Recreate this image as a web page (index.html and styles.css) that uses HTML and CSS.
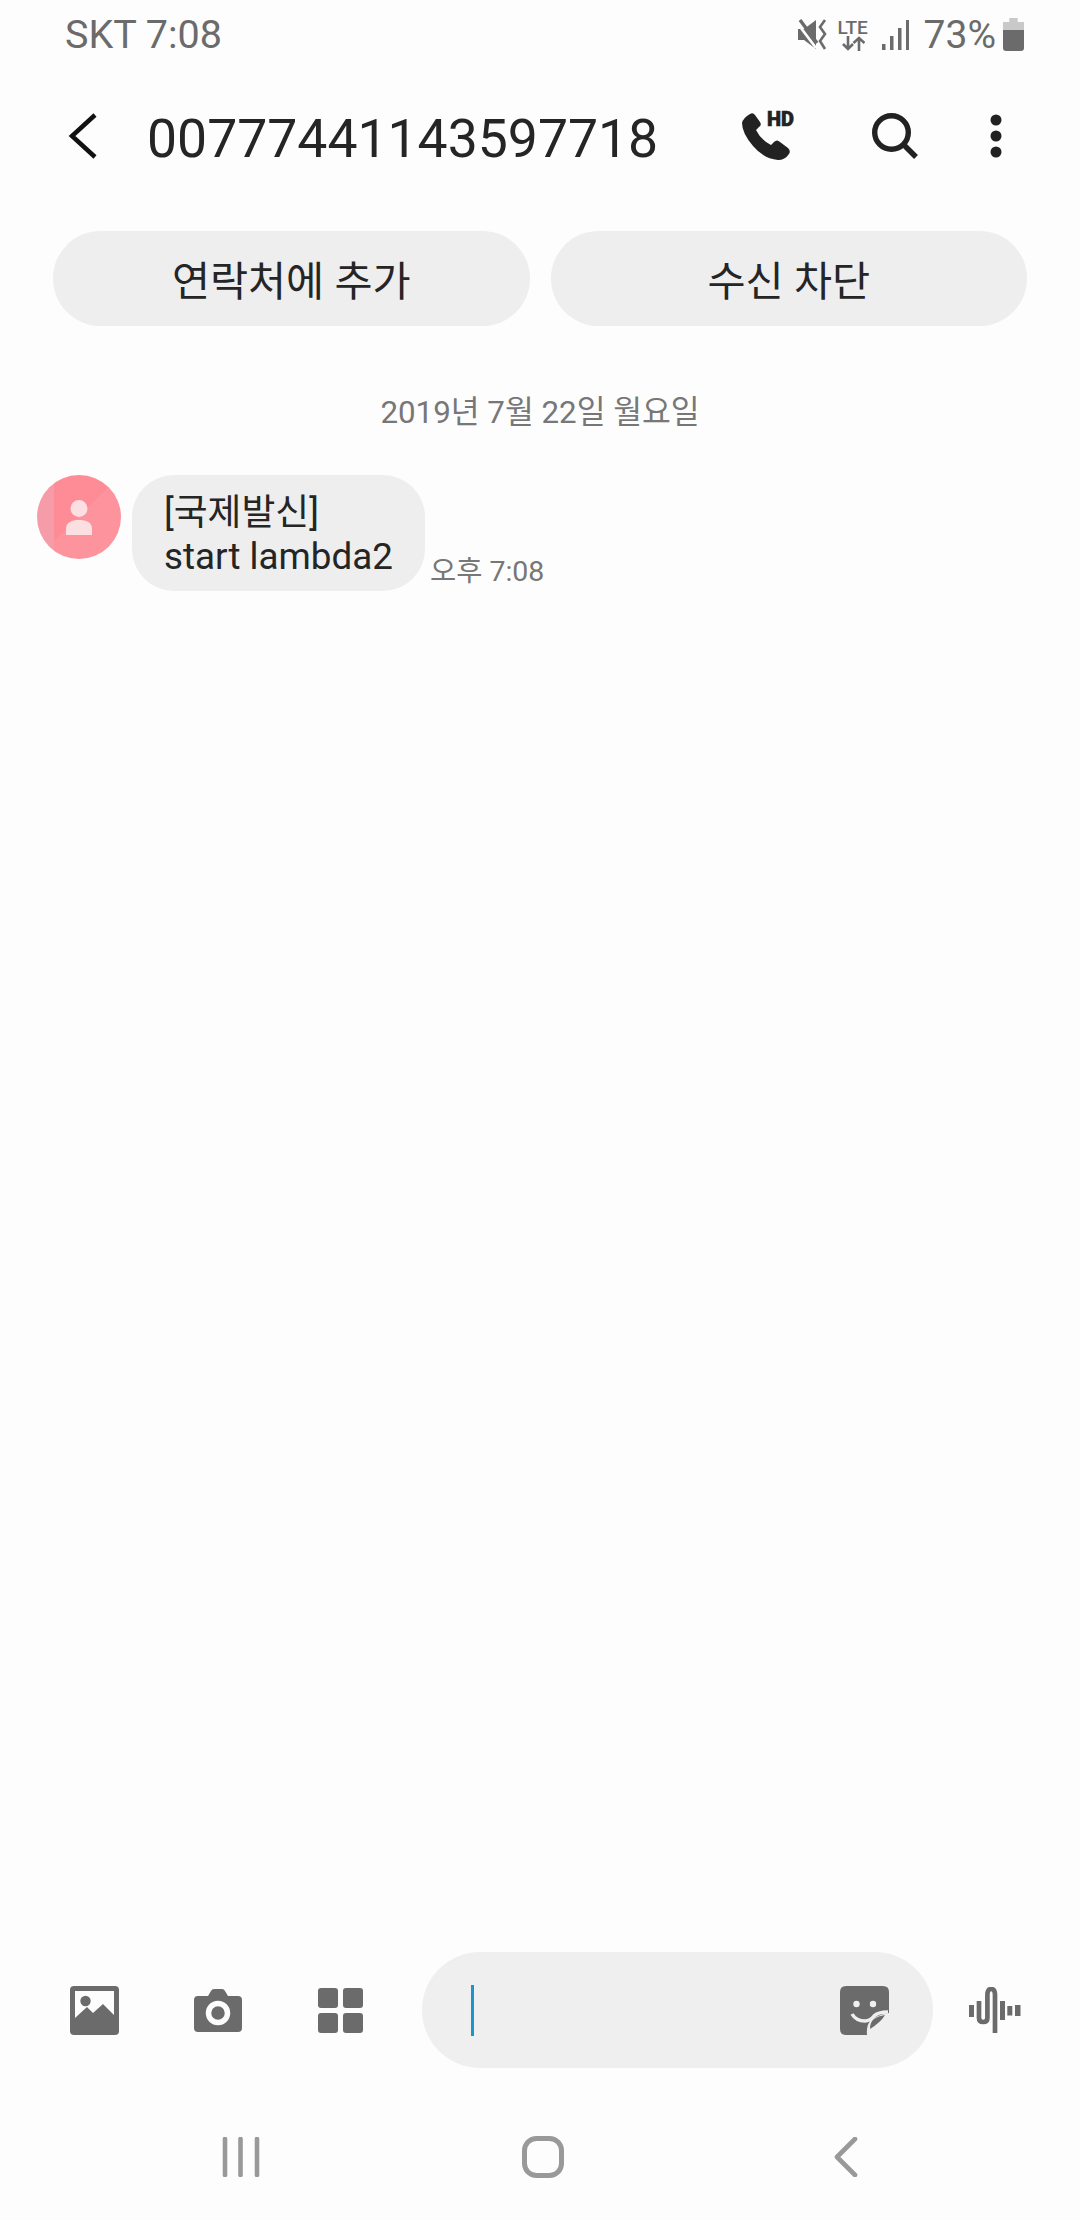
FILE: index.html
```html
<!DOCTYPE html>
<html lang="ko">
<head>
  <meta charset="UTF-8">
  <title>Messages</title>
  <link rel="stylesheet" href="styles.css">
</head>
<body>
<div class="screen">

  <div class="status">
    <span class="status-left">SKT 7:08</span>
    <div class="status-right">
      <svg class="ic-mute" width="30" height="31" viewBox="0 0 30 31">
        <path d="M0 10h6l12-9v29L6 21H0z" fill="#6b6b6b"/>
        <path d="M0 5l18 24" stroke="#fdfdfd" stroke-width="2.600"/>
        <path d="M2 1l17 23" stroke="#6b6b6b" stroke-width="3.400"/>
        <path d="M27 1l-5 7 5 7-5 7 5 8" fill="none" stroke="#6b6b6b" stroke-width="2.600"/>
      </svg>
      <div class="ic-lte">
        <span class="lte-text">LTE</span>
        <svg width="24" height="15" viewBox="0 0 24 15">
          <path d="M7 0v13M2 8l5 5 5-5" fill="none" stroke="#6b6b6b" stroke-width="2.600"/>
          <path d="M18 15V2M12.500 7l5.500-5 5.500 5" fill="none" stroke="#6b6b6b" stroke-width="2.600"/>
        </svg>
      </div>
      <svg class="ic-signal" width="27" height="30" viewBox="0 0 27 30" fill="#6b6b6b">
        <rect x="0" y="24" width="3.500" height="6"/>
        <rect x="8" y="16" width="3.500" height="14"/>
        <rect x="16" y="8" width="3.500" height="22"/>
        <rect x="24" y="0" width="3" height="30"/>
      </svg>
      <span class="battery-text">73%</span>
      <div class="battery"></div>
    </div>
  </div>

  <div class="header">
    <svg class="ic-back" width="30" height="46" viewBox="0 0 30 46">
      <path d="M27 2L4 23l23 21" fill="none" stroke="#111" stroke-width="4.500"/>
    </svg>
    <h1 class="title">00777441143597718</h1>
    <svg class="ic-call" width="56" height="57" viewBox="0 -8 56 57">
      <path d="M8 3Q11 1 13 4L18 11Q20 14 17 16L14 19Q19 29 29 34L32 31Q35 28 38 31L46 37Q49 40 47 43Q43 49 36 49Q22 48 11 35Q0 22 0 12Q1 7 8 3Z" fill="#222"/>
      <text x="25" y="15" font-family="Roboto" font-weight="900" font-size="21" textLength="27" lengthAdjust="spacingAndGlyphs" fill="#222" stroke="#222" stroke-width=".6">HD</text>
    </svg>
    <svg class="ic-search" width="46" height="46" viewBox="0 0 46 46">
      <circle cx="19.500" cy="19.500" r="16.800" fill="none" stroke="#222" stroke-width="5.400"/>
      <path d="M31 31l13 13" stroke="#222" stroke-width="5.400"/>
    </svg>
    <svg class="ic-more" width="12" height="44" viewBox="0 0 12 44" fill="#222">
      <circle cx="6" cy="6" r="5.500"/>
      <circle cx="6" cy="22" r="5.500"/>
      <circle cx="6" cy="38" r="5.500"/>
    </svg>
  </div>

  <div class="actions">
    <div class="action-btn">연락처에 추가</div>
    <div class="action-btn">수신 차단</div>
  </div>

  <div class="date">2019년 7월 22일 월요일</div>

  <div class="message">
    <div class="avatar">
      <svg width="26" height="35" viewBox="0 0 26 35" fill="#fbdfe1">
        <circle cx="13" cy="8.500" r="8.500"/>
        <path d="M0 35v-6C0 22 6 20 13 20s13 2 13 9v6z"/>
      </svg>
    </div>
    <div class="bubble">[국제발신]<br>start lambda2</div>
    <div class="msg-time">오후 7:08</div>
  </div>

  <div class="spacer"></div>

  <div class="composer">
    <svg class="ic-image" width="49" height="49" viewBox="0 0 49 49">
      <rect width="49" height="49" rx="4" fill="#6b6b6b"/>
      <path d="M5 5h39v24l-11-11-10 9-6-6-12 11z" fill="#fdfdfd"/>
      <circle cx="15.500" cy="15" r="5.200" fill="#6b6b6b"/>
    </svg>
    <svg class="ic-camera" width="48" height="43" viewBox="0 0 48 43">
      <path d="M4 7h10l3-5q1-2 3-2h8q2 0 3 2l3 5h10q4 0 4 4v28q0 4-4 4H4q-4 0-4-4V11q0-4 4-4z" fill="#6b6b6b"/>
      <circle cx="24" cy="24" r="9.500" fill="none" stroke="#fdfdfd" stroke-width="5.500"/>
    </svg>
    <div class="ic-grid">
      <i></i><i></i><i></i><i></i>
    </div>
    <div class="input-pill">
      <div class="cursor"></div>
      <svg class="ic-sticker" width="49" height="49" viewBox="0 0 49 49">
        <path d="M6 0h37q6 0 6 6v21L27 49H6q-6 0-6-6V6q0-6 6-6z" fill="#6b6b6b"/>
        <circle cx="16.500" cy="18" r="3.200" fill="#efefef"/>
        <circle cx="33" cy="18" r="3.200" fill="#efefef"/>
        <path d="M12 28q4 7 13 7 5 0 9-5 4-4 14-4" fill="none" stroke="#efefef" stroke-width="3.500"/>
        <path d="M27 49q-1-10 4-15 6-5 18-7l1 2-22 20z" fill="#efefef"/>
        <path d="M30 43q0-7 4-10 4-3 11-4-4 7-15 14z" fill="#6b6b6b"/>
      </svg>
    </div>
    <svg class="ic-voice" width="52" height="47" viewBox="0 0 52 47" fill="#6b6b6b">
      <rect x="0" y="18" width="5" height="12"/>
      <path d="M10 14v17q0 4 4.200 4t4.200-4V8q0-6 3.800-6t3.800 6v38" fill="none" stroke="#6b6b6b" stroke-width="4.700"/>
      <rect x="31" y="14" width="5" height="19"/>
      <rect x="38.300" y="19" width="5" height="9.500"/>
      <rect x="46" y="18" width="5.500" height="11"/>
    </svg>
  </div>

  <div class="navbar">
    <svg width="40" height="40" viewBox="0 0 40 40">
      <path d="M3 2v36M18.500 2v36M35 2v36" stroke="#999" stroke-width="4.600" stroke-linecap="round"/>
    </svg>
    <svg class="nav-home" width="42" height="42" viewBox="0 0 42 42">
      <rect x="2.500" y="2.500" width="37" height="37" rx="12" fill="none" stroke="#999" stroke-width="5"/>
    </svg>
    <svg class="nav-back" width="24" height="40" viewBox="0 0 24 40">
      <path d="M21 2L3 20l18 18" fill="none" stroke="#999" stroke-width="4.600" stroke-linecap="round" stroke-linejoin="round"/>
    </svg>
  </div>

</div>
</body>
</html>
```

FILE: styles.css
```css
* { box-sizing: border-box; }
html, body { margin: 0; padding: 0; }
body {
  background: #fdfdfd;
  font-family: Roboto, "Noto Sans CJK KR", sans-serif;
  color: #252525;
}
.screen {
  width: 1080px;
  height: 2220px;
  display: flex;
  flex-direction: column;
  overflow: hidden;
}

/* status bar */
.status {
  height: 66px;
  display: flex;
  justify-content: space-between;
  align-items: center;
  padding: 3px 56px 0 65px;
  color: #6b6b6b;
}
.status-left { font-size: 39.500px; }
.status-right { display: flex; align-items: center; }
.ic-lte {
  display: flex;
  flex-direction: column;
  align-items: center;
  width: 30px;
  margin-left: 10px;
}
.lte-text { font-size: 19px; font-weight: 500; line-height: 17px; }
.ic-signal { margin-left: 14px; }
.battery-text { font-size: 39px; margin-left: 15px; }
.battery {
  width: 21px;
  height: 33px;
  margin-left: 7px;
  background: linear-gradient(#c9c9c9 0 12px, #6b6b6b 12px);
  border-radius: 3px;
  clip-path: polygon(0 4px, 30% 4px, 30% 0, 70% 0, 70% 4px, 100% 4px, 100% 100%, 0 100%);
}

/* header */
.header {
  height: 139px;
  display: flex;
  align-items: center;
  padding-left: 68px;
}
.title {
  margin: 0 0 0 49px;
  padding-top: 5px;
  width: 595px;
  font-size: 53.500px;
  font-weight: 400;
  color: #252525;
}
.ic-call { margin: -8px -4px 0 0; }
.ic-search { margin-left: 78px; }
.ic-more { margin-left: 72px; }

/* add / block buttons */
.actions {
  display: flex;
  gap: 21px;
  padding: 26px 53px 0;
}
.action-btn {
  flex: 1;
  height: 95px;
  padding-bottom: 2px;
  border-radius: 48px;
  background: #eeeeee;
  display: flex;
  align-items: center;
  justify-content: center;
  font-size: 41.400px;
}

.date {
  margin-top: 64px;
  text-align: center;
  font-size: 31.300px;
  line-height: 46px;
  color: #777;
}

/* message row */
.message {
  display: flex;
  align-items: flex-end;
  margin-top: 39px;
  padding-left: 37px;
}
.avatar {
  width: 84px;
  height: 84px;
  align-self: flex-start;
  border-radius: 50%;
  display: flex;
  align-items: center;
  justify-content: center;
  background:
    linear-gradient(90deg, #f59ca8 0 20%, transparent 20%),
    linear-gradient(135deg, #fd8c97 50%, #fc939d 50%);
}
.bubble {
  margin-left: 11px;
  padding: 16px 32px 12px 32px;
  border-radius: 42px;
  background: #eeeeee;
  font-size: 36.800px;
  line-height: 44px;
}
.msg-time {
  margin-left: 5px;
  font-size: 28.500px;
  line-height: 44px;
  margin-bottom: -3px;
  color: #777;
}

.spacer { flex: 1; }

/* bottom composer */
.composer {
  display: flex;
  align-items: center;
  height: 116px;
  padding-left: 70px;
}
.ic-camera { margin-left: 75px; }
.ic-grid {
  display: grid;
  grid-template-columns: 20px 20px;
  grid-template-rows: 20px 20px;
  gap: 5px;
  margin-left: 76px;
}
.ic-grid i {
  display: block;
  background: #6b6b6b;
  border-radius: 3px;
}
.input-pill {
  width: 511px;
  height: 116px;
  margin-left: 59px;
  border-radius: 58px;
  background: #efefef;
  display: flex;
  align-items: center;
  justify-content: space-between;
  padding: 0 44px 0 49px;
}
.cursor { width: 3px; height: 51px; background: #1a96c8; }
.ic-voice { margin-left: 36px; }

/* system nav */
.navbar {
  display: flex;
  align-items: center;
  height: 152px;
  padding: 26px 0 0 222px;
}
.nav-home { margin-left: 260px; }
.nav-back { margin-left: 270px; }
```
